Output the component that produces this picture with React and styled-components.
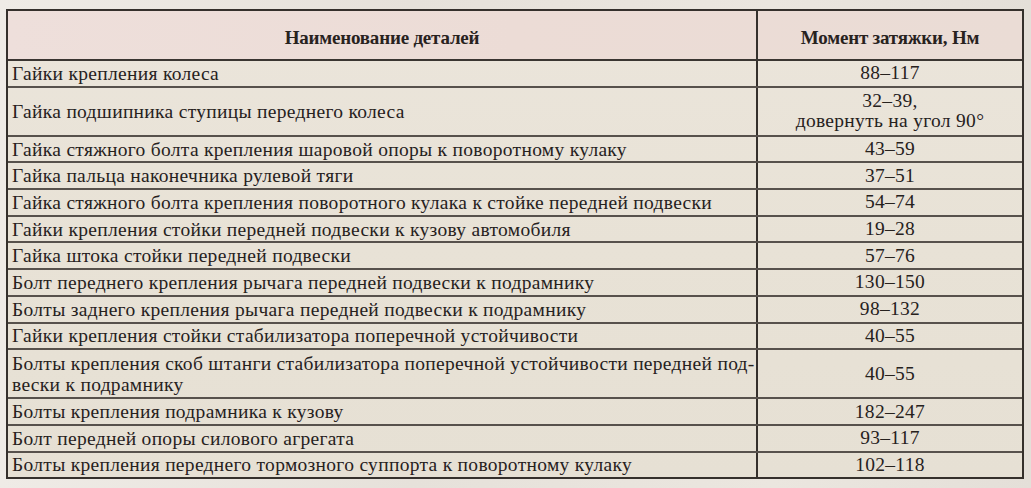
import React from "react";
import styled, { createGlobalStyle } from "styled-components";

const serif = `"Liberation Serif", "DejaVu Serif", "Times New Roman", serif`;

const Global = createGlobalStyle`
  html, body { margin: 0; padding: 0; }
  body {
    background: #ebe7e1;
    font-family: ${serif};
    color: #2b2622;
  }
`;

const Page = styled.div`
  width: 1031px;
  height: 488px;
  padding: 9px 7px 0 6px;
  box-sizing: border-box;
  font-family: ${serif};
  background: linear-gradient(90deg, #efebe6 0%, #e6e1da 40%, #ebe6df 75%, #e4dfd8 100%);
`;

const Table = styled.div`
  border: 2px solid #35302c;
  background: linear-gradient(180deg, #ebe5db 0%, #e8e2d6 50%, #e6e0d4 100%);
`;

const Row = styled.div`
  display: grid;
  grid-template-columns: 748px 1fr;
  border-top: ${(p) => (p.$first ? "none" : p.$strong ? "2px solid #3a3531" : "2px solid #57514c")};
  min-height: ${(p) => (p.$tall ? "47px" : "24.7px")};
`;

const HeadRow = styled(Row)`
  height: 48px;
  background: linear-gradient(90deg, #eedfdb 0%, #ecdcd6 50%, #eadcd5 100%);
`;

const HeadCell = styled.div`
  display: flex;
  align-items: center;
  justify-content: center;
  padding-top: 5px;
  font-family: ${serif};
  font-weight: bold;
  font-size: 19px;
  letter-spacing: -0.2px;
  color: #28221e;
  border-left: ${(p) => (p.$divider ? "2px solid #35302c" : "none")};
`;

const NameCell = styled.div`
  display: flex;
  align-items: center;
  padding: 0 4px;
  font-family: ${serif};
  font-size: 19.5px;
  letter-spacing: 0.3px;
  line-height: 21px;
  color: #26211d;
  white-space: nowrap;
`;

const ValueCell = styled.div`
  display: flex;
  align-items: center;
  justify-content: center;
  text-align: center;
  border-left: 2px solid #35302c;
  font-family: ${serif};
  font-size: 19.5px;
  letter-spacing: 0.3px;
  line-height: 20px;
  color: #26211d;
`;

const rows = [
  ["Гайки крепления колеса", "88–117"],
  ["Гайка подшипника ступицы переднего колеса", ["32–39,", "довернуть на угол 90°"], true],
  ["Гайка стяжного болта крепления шаровой опоры к поворотному кулаку", "43–59"],
  ["Гайка пальца наконечника рулевой тяги", "37–51"],
  ["Гайка стяжного болта крепления поворотного кулака к стойке передней подвески", "54–74"],
  ["Гайки крепления стойки передней подвески к кузову автомобиля", "19–28"],
  ["Гайка штока стойки передней подвески", "57–76"],
  ["Болт переднего крепления рычага передней подвески к подрамнику", "130–150"],
  ["Болты заднего крепления рычага передней подвески к подрамнику", "98–132"],
  ["Гайки крепления стойки стабилизатора поперечной устойчивости", "40–55"],
  [["Болты крепления скоб штанги стабилизатора поперечной устойчивости передней под-", "вески к подрамнику"], "40–55", true],
  ["Болты крепления подрамника к кузову", "182–247"],
  ["Болт передней опоры силового агрегата", "93–117"],
  ["Болты крепления переднего тормозного суппорта к поворотному кулаку", "102–118"],
];

const Lines = ({ v }) =>
  Array.isArray(v) ? (
    <span>
      {v[0]}
      <br />
      {v[1]}
    </span>
  ) : (
    <span>{v}</span>
  );

export default function App() {
  return (
    <>
      <Global />
      <Page>
        <Table>
          <HeadRow $first>
            <HeadCell>Наименование деталей</HeadCell>
            <HeadCell $divider>Момент затяжки, Нм</HeadCell>
          </HeadRow>
          {rows.map(([name, val, tall], i) => (
            <Row key={i} $tall={tall} $strong={i === 0}>
              <NameCell>
                <Lines v={name} />
              </NameCell>
              <ValueCell>
                <Lines v={val} />
              </ValueCell>
            </Row>
          ))}
        </Table>
      </Page>
    </>
  );
}
